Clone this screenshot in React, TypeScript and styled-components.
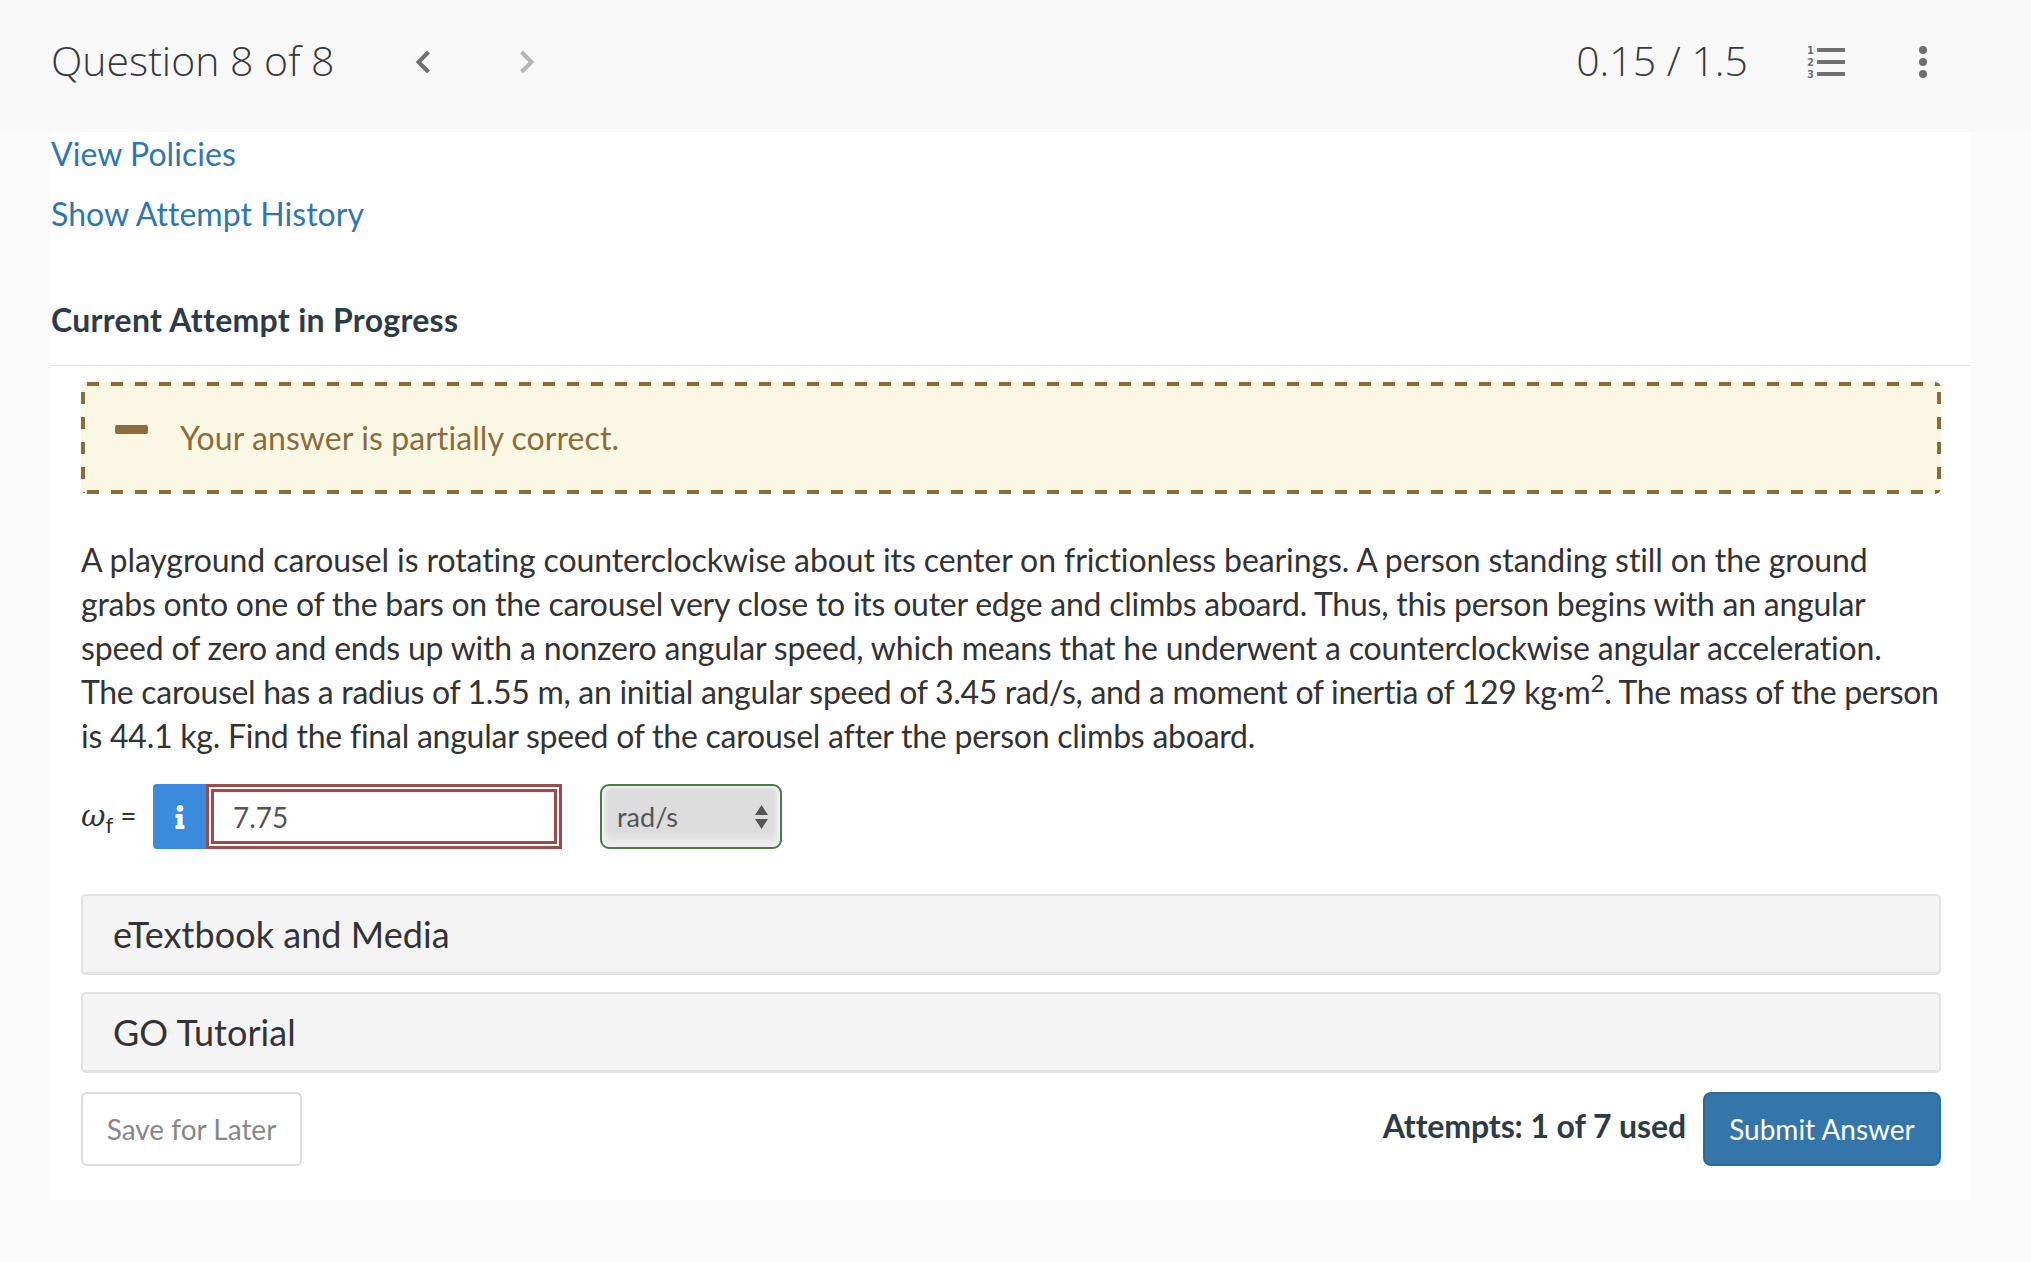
import React from "react";
import styled, { createGlobalStyle } from "styled-components";
import { FaInfo } from "react-icons/fa";

const Global = createGlobalStyle`
  html, body { margin: 0; padding: 0; background: #fafafa; }
  body { font-family: Lato, "Liberation Sans", sans-serif; color: #333; }
  * { box-sizing: border-box; }
`;

const Page = styled.div`
  width: 2031px;
  height: 1262px;
  background: #fafafa;
  overflow: hidden;
`;

const Header = styled.header`
  height: 132px;
  background: #f8f8f8;
  display: flex;
  align-items: center;
  padding: 0 0 12px 51px;
  color: #3a3a3a;
  font-family: "Open Sans", sans-serif;
  font-size: 41px;
  font-weight: 300;
`;

const Title = styled.h1`
  margin: 0;
  font: inherit;
  width: 363px;
  white-space: nowrap;
`;

const NavArrow = styled.button`
  width: 104px;
  height: 60px;
  margin-top: 4px;
  padding: 0;
  border: 0;
  background: none;
  display: flex;
  align-items: center;
  color: ${(p: { $off?: boolean }) => (p.$off ? "#b5b5b5" : "#707070")};
`;

const Spacer = styled.div`
  flex: 1;
`;

const Score = styled.div`
  white-space: nowrap;
  margin-right: 59px;
`;

const IconButton = styled.button`
  margin-top: 4px;
  padding: 0;
  border: 0;
  background: none;
  display: flex;
  color: #707070;
`;

const KebabButton = styled(IconButton)`
  margin: 4px 103px 0 73px;
`;

const Panel = styled.main`
  width: 1920px;
  height: 1068px;
  margin-left: 51px;
  background: #fff;
`;

const LinkList = styled.nav`
  display: flex;
  flex-direction: column;
  align-items: flex-start;
  gap: 16px;
`;

const TextLink = styled.a`
  color: #2f77b0;
  font-size: 32px;
  line-height: 44px;
  letter-spacing: 0.05px;
  text-decoration: none;
`;

const AttemptHeading = styled.h2`
  margin: 0;
  height: 130px;
  padding-top: 62px;
  font-size: 32px;
  line-height: 44px;
  font-weight: 700;
  color: #2d3b45;
  border-bottom: 1px solid #e6e6e6;
  letter-spacing: 0.3px;
`;

const Body = styled.section`
  padding: 16px 30px 0;
`;

const dash = "#8a6d3b";

const Alert = styled.div`
  height: 112px;
  border-radius: 6px;
  background-color: #fbf7e5;
  background-image:
    repeating-linear-gradient(90deg, ${dash} 0 12px, transparent 12px 24px),
    repeating-linear-gradient(90deg, ${dash} 0 12px, transparent 12px 24px),
    repeating-linear-gradient(180deg, ${dash} 0 12px, transparent 12px 25px),
    repeating-linear-gradient(180deg, ${dash} 0 12px, transparent 12px 25px);
  background-size: 100% 4px, 100% 4px, 4px 100%, 4px 100%;
  background-position: 6px 0, 6px 100%, 0 10px, 100% 10px;
  background-repeat: no-repeat;
  display: flex;
  align-items: center;
  padding: 0 0 2px 34px;
  color: #8a6d3b;
  font-size: 32px;
  letter-spacing: 0.08px;
`;

const Minus = styled.span`
  width: 33px;
  height: 9px;
  border-radius: 2px;
  background: #8a6d3b;
  margin: -16px 32px 0 0;
`;

const Problem = styled.p`
  margin: 44px 0 0;
  font-size: 32px;
  line-height: 44px;
  color: #333;
  white-space: nowrap;
`;

const TextLine = styled.span<{ $tracking: number }>`
  display: block;
  letter-spacing: ${(p) => p.$tracking}px;
`;

const Sup = styled.sup`
  font-size: 24px;
  line-height: 0;
`;

const AnswerRow = styled.div`
  margin-top: 26px;
  height: 65px;
  display: flex;
  align-items: center;
`;

const MathLabel = styled.span`
  width: 72px;
  margin-top: -3px;
  color: #333;
  font-size: 28px;
  white-space: nowrap;
  font-family: Lato, sans-serif;
`;

const Omega = styled.i`
  font-family: "DejaVu Serif", serif;
  font-size: 30px;
`;

const MathSub = styled.sub`
  font-size: 22px;
  line-height: 0;
`;

const InfoTag = styled.span`
  width: 53px;
  height: 65px;
  background: #3b8ade;
  border-radius: 4px 0 0 4px;
  display: flex;
  align-items: center;
  justify-content: center;
  color: #fff;
`;

const AnswerInput = styled.input`
  width: 356px;
  height: 65px;
  border: 8px double #9e4a48;
  padding: 0 14px 0 19px;
  font-family: Lato, sans-serif;
  font-size: 28px;
  color: #555;
  background: #fff;
  outline: none;
  box-shadow: inset 0 1px 1px rgba(0, 0, 0, 0.08);
`;

const SelectWrap = styled.div`
  position: relative;
  margin-left: 38px;
  width: 182px;
  height: 65px;
`;

const UnitSelect = styled.select`
  appearance: none;
  width: 100%;
  height: 100%;
  border: 2px solid #4a7a47;
  border-radius: 9px;
  padding: 0 0 0 15px;
  font-family: Lato, sans-serif;
  font-size: 27px;
  color: #555;
  background: #dcdcdc;
  box-shadow: inset 0 -14px 10px -6px #f0f0f0, inset 5px 0 4px -2px #f4f4f4, inset -5px 0 4px -2px #f6f6f6, inset 0 4px 3px -2px #eee;
`;

const SelectArrows = styled.svg`
  position: absolute;
  right: 14px;
  top: 21px;
  pointer-events: none;
`;

const Accordion = styled.div`
  height: 81px;
  margin-top: ${(p: { $first?: boolean }) => (p.$first ? "45px" : "17px")};
  background: #f4f4f4;
  border: 2px solid #e2e2e2;
  border-bottom-width: 3px;
  border-radius: 5px;
  display: flex;
  align-items: center;
  padding-left: 30px;
  font-size: 36px;
  letter-spacing: 0.05px;
  color: #333;
`;

const Footer = styled.div`
  margin-top: 19px;
  display: flex;
  align-items: center;
`;

const SaveButton = styled.button`
  width: 221px;
  height: 74px;
  border: 2px solid #ddd;
  border-radius: 6px;
  background: #fff;
  color: #888;
  font-family: Lato, sans-serif;
  font-size: 28px;
`;

const Attempts = styled.strong`
  margin-left: auto;
  margin-top: -7px;
  font-size: 32px;
  color: #2d3b45;
  font-weight: 700;
  letter-spacing: -0.1px;
`;

const SubmitButton = styled.button`
  width: 238px;
  height: 74px;
  margin-left: 17px;
  border: 2px solid #2d6a98;
  border-radius: 8px;
  background: #3476a9;
  color: #fff;
  font-family: Lato, sans-serif;
  font-size: 28px;
`;

export default function App() {
  return (
    <Page>
      <Global />
      <Header>
        <Title>Question 8 of 8</Title>
        <NavArrow aria-label="Previous">
          <svg width="18" height="26" viewBox="0 0 18 26">
            <path d="M14.5 3 L4.5 13 L14.5 23" fill="none" stroke="currentColor" strokeWidth="4" />
          </svg>
        </NavArrow>
        <NavArrow $off aria-label="Next">
          <svg width="18" height="26" viewBox="0 0 18 26">
            <path d="M3.5 3 L13.5 13 L3.5 23" fill="none" stroke="currentColor" strokeWidth="4" />
          </svg>
        </NavArrow>
        <Spacer />
        <Score>0.15 / 1.5</Score>
        <IconButton aria-label="Question list">
          <svg width="38" height="36" viewBox="0 -2 38 36">
            <rect x="10" y="2" width="28" height="4" fill="currentColor" />
            <rect x="10" y="14" width="28" height="4" fill="currentColor" />
            <rect x="10" y="26" width="28" height="4" fill="currentColor" />
            <g fontFamily="'DejaVu Sans', sans-serif" fontWeight="700" fontSize="10" fill="currentColor">
              <text x="0" y="8">1</text>
              <text x="0" y="20">2</text>
              <text x="0" y="32">3</text>
            </g>
          </svg>
        </IconButton>
        <KebabButton aria-label="More">
          <svg width="10" height="34" viewBox="0 0 10 34">
            <circle cx="5" cy="5" r="4" fill="currentColor" />
            <circle cx="5" cy="17" r="4" fill="currentColor" />
            <circle cx="5" cy="29" r="4" fill="currentColor" />
          </svg>
        </KebabButton>
      </Header>
      <Panel>
        <LinkList>
          <TextLink href="#">View Policies</TextLink>
          <TextLink href="#">Show Attempt History</TextLink>
        </LinkList>
        <AttemptHeading>Current Attempt in Progress</AttemptHeading>
        <Body>
          <Alert>
            <Minus />
            Your answer is partially correct.
          </Alert>
          <Problem>
            <TextLine $tracking={-0.095}>
              A playground carousel is rotating counterclockwise about its center on frictionless bearings. A person standing still on the ground
            </TextLine>
            <TextLine $tracking={-0.24}>
              grabs onto one of the bars on the carousel very close to its outer edge and climbs aboard. Thus, this person begins with an angular
            </TextLine>
            <TextLine $tracking={-0.19}>
              speed of zero and ends up with a nonzero angular speed, which means that he underwent a counterclockwise angular acceleration.
            </TextLine>
            <TextLine $tracking={-0.307}>
              The carousel has a radius of 1.55 m, an initial angular speed of 3.45 rad/s, and a moment of inertia of 129 kg·m<Sup>2</Sup>. The mass of the person
            </TextLine>
            <TextLine $tracking={-0.236}>
              is 44.1 kg. Find the final angular speed of the carousel after the person climbs aboard.
            </TextLine>
          </Problem>
          <AnswerRow>
            <MathLabel>
              <Omega>ω</Omega>
              <MathSub>f</MathSub> =
            </MathLabel>
            <InfoTag>
              <FaInfo size={24} />
            </InfoTag>
            <AnswerInput defaultValue="7.75" />
            <SelectWrap>
              <UnitSelect defaultValue="rad/s">
                <option>rad/s</option>
              </UnitSelect>
              <SelectArrows width="13" height="24" viewBox="0 0 13 24">
                <path d="M6.5 0 L13 10 L0 10 Z M6.5 24 L13 14 L0 14 Z" fill="#555" />
              </SelectArrows>
            </SelectWrap>
          </AnswerRow>
          <Accordion $first>eTextbook and Media</Accordion>
          <Accordion>GO Tutorial</Accordion>
          <Footer>
            <SaveButton>Save for Later</SaveButton>
            <Attempts>Attempts: 1 of 7 used</Attempts>
            <SubmitButton>Submit Answer</SubmitButton>
          </Footer>
        </Body>
      </Panel>
    </Page>
  );
}
